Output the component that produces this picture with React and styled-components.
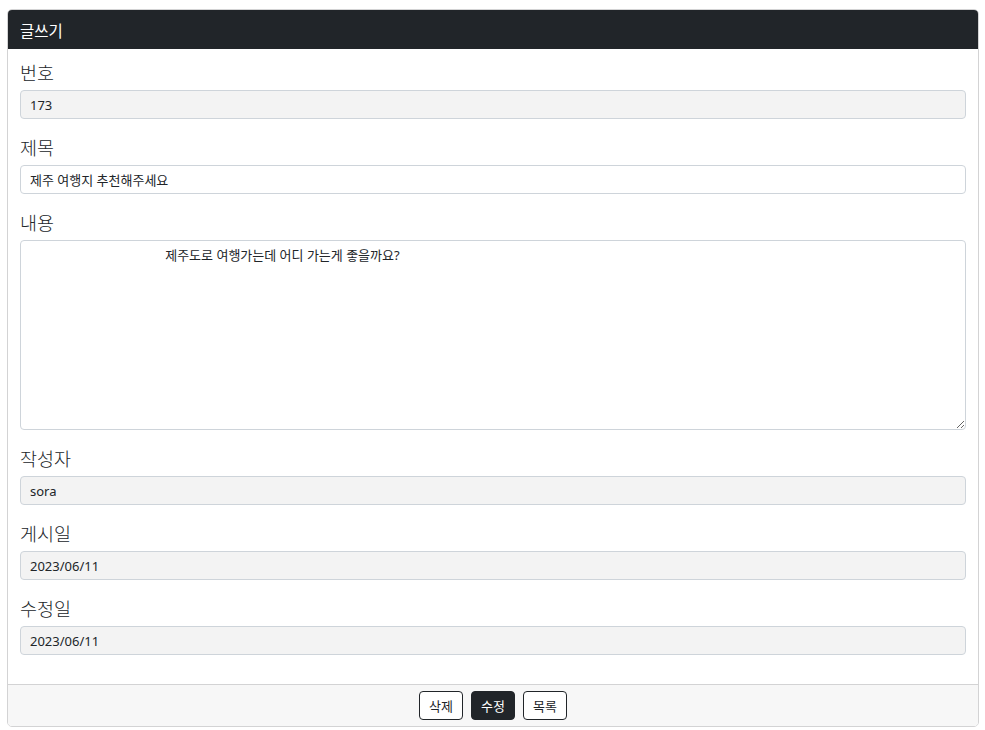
import React from "react";
import styled, { createGlobalStyle } from "styled-components";

const GlobalStyle = createGlobalStyle`
  * { box-sizing: border-box; }
  body {
    margin: 0;
    background: #ffffff;
    color: #212529;
    font-family: "Noto Sans", "Noto Sans CJK KR", sans-serif;
  }
`;

const Page = styled.div`
  padding: 9px 6px 0 7px;
`;

const Card = styled.form`
  border: 1px solid #d3d3d4;
  border-radius: 5px;
  overflow: hidden;
  background: #fff;
`;

const CardHeader = styled.div`
  background: #212529;
  color: #ffffff;
  height: 39px;
  padding: 0 12px;
  display: flex;
  align-items: center;
  font-size: 15.5px;
  font-family: "Noto Sans CJK KR", sans-serif;
`;

const CardBody = styled.div`
  padding: 11px 12px 13px 12px;
`;

const Group = styled.div`
  margin-bottom: 16px;
`;

const Label = styled.label`
  display: block;
  height: 30px;
  line-height: 25px;
  font-size: 18.5px;
  font-weight: 300;
  font-family: "Noto Sans CJK KR", sans-serif;
  color: #212529;
`;

const Input = styled.input`
  display: block;
  width: 100%;
  height: 29px;
  padding: 0 9px;
  font-size: 13px;
  font-family: "Noto Sans", "Noto Sans CJK KR", sans-serif;
  color: #212529;
  border: 1px solid #ced4da;
  border-radius: 4px;
  background: ${(p) => (p.readOnly ? "#f3f3f3" : "#ffffff")};
  outline: none;
`;

const TextArea = styled.textarea`
  display: block;
  width: 100%;
  height: 190px;
  padding: 4px 9px;
  font-size: 13px;
  line-height: 20px;
  font-family: "Noto Sans", "Noto Sans CJK KR", sans-serif;
  color: #212529;
  border: 1px solid #ced4da;
  border-radius: 4px;
  resize: vertical;
  white-space: pre-wrap;
  outline: none;
`;

const CardFooter = styled.div`
  background: #f7f7f7;
  border-top: 1px solid #d3d3d4;
  height: 42px;
  display: flex;
  justify-content: center;
  align-items: center;
  gap: 8px;
`;

const Button = styled.button`
  height: 29px;
  padding: 0 9px;
  font-size: 13px;
  font-family: "Noto Sans CJK KR", sans-serif;
  border-radius: 4px;
  border: 1px solid #212529;
  background: ${(p) => (p.$dark ? "#212529" : "#ffffff")};
  color: ${(p) => (p.$dark ? "#ffffff" : "#212529")};
  cursor: pointer;
`;

const content =
  "                                        제주도로 여행가는데 어디 가는게 좋을까요?";

export default function App() {
  return (
    <Page>
      <GlobalStyle />
      <Card onSubmit={(e) => e.preventDefault()}>
        <CardHeader>글쓰기</CardHeader>
        <CardBody>
          <Group>
            <Label>번호</Label>
            <Input readOnly defaultValue="173" />
          </Group>
          <Group>
            <Label>제목</Label>
            <Input defaultValue="제주 여행지 추천해주세요" />
          </Group>
          <Group>
            <Label>내용</Label>
            <TextArea defaultValue={content} />
          </Group>
          <Group>
            <Label>작성자</Label>
            <Input readOnly defaultValue="sora" />
          </Group>
          <Group>
            <Label>게시일</Label>
            <Input readOnly defaultValue="2023/06/11" />
          </Group>
          <Group>
            <Label>수정일</Label>
            <Input readOnly defaultValue="2023/06/11" />
          </Group>
        </CardBody>
        <CardFooter>
          <Button type="button">삭제</Button>
          <Button type="button" $dark>수정</Button>
          <Button type="button">목록</Button>
        </CardFooter>
      </Card>
    </Page>
  );
}
